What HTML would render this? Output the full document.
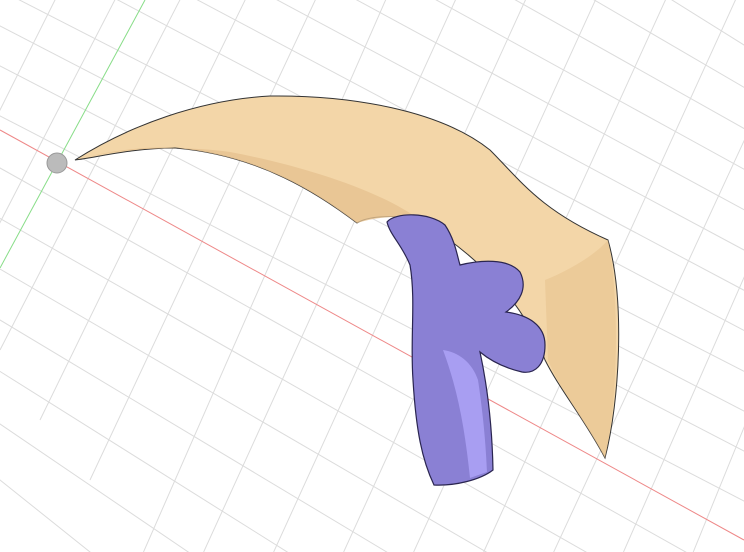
<!DOCTYPE html><html><head><style>html,body{margin:0;padding:0;background:#fff;overflow:hidden}svg{display:block}</style></head><body>
<svg width="744" height="552" viewBox="0 0 744 552" xmlns="http://www.w3.org/2000/svg">
<rect width="744" height="552" fill="#fff"/>
<g stroke="#dcdcdc" stroke-width="1" fill="none">
<path d="M-50,40 L800,480M-50,0 L800,440M0,-10 L800,400M80,-20 L800,360M160,-20 L800,320M240,-20 L800,280M320,-20 L800,240M400,-20 L800,200M480,-20 L800,160M560,-20 L800,120M640,-20 L800,80M-50,90 L800,530M-50,140 L700,560M-50,190 L600,560M-50,240 L500,560M-50,290 L400,560M-50,340 L300,560M-50,390 L200,560M-50,440 L100,560"/>
<path d="M60,-10 L-60,230M120,-10 L-40,300M185,-10 L0,350M250,-10 L40,420M320,-10 L90,480M390,-10 L140,560M460,-10 L200,560M530,-10 L270,560M600,-10 L340,560M670,-10 L410,560M740,-10 L480,560M800,20 L550,560M800,150 L620,560M800,290 L690,560"/>
</g>
<line x1="0" y1="130" x2="744" y2="540" stroke="#e88" stroke-width="1"/>
<line x1="145" y1="0" x2="0" y2="268" stroke="#8d8" stroke-width="1"/>
<circle cx="57" cy="163" r="10" fill="#bbb" stroke="#999"/>
<path d="M75,160 C130,125 200,100 270,96 C350,95 440,110 490,150 C520,180 540,210 608,240 C625,300 620,400 605,458 C585,420 560,390 545,360 C530,320 500,270 420,220 C400,215 370,215 357,223 C320,195 260,155 175,148 C130,148 95,158 75,160 Z" fill="#f3d6a8" stroke="#333" stroke-width="1"/>
<path d="M75,160 C110,150 150,146 175,148 C260,155 320,195 357,223 C380,216 405,215 420,220 C380,190 300,165 230,152 C170,144 110,150 75,160Z" fill="#e6c290" opacity="0.8"/>
<path d="M545,280 C570,270 595,255 608,240 C620,300 618,400 605,458 C585,420 560,390 548,360Z" fill="#e8c38f" opacity="0.6"/>
<path d="M387,222 C395,212 430,212 445,225 C455,240 457,255 460,265 C480,260 508,258 520,272 C528,288 520,302 506,312 C528,315 545,325 545,345 C545,365 535,374 522,372 C505,368 492,362 480,352 C486,380 492,420 493,470 C480,480 455,486 434,485 C422,460 416,430 413,380 C410,340 416,300 410,265 C402,245 390,235 387,222Z" fill="#8a80d4" stroke="#2a2550" stroke-width="1.2"/>
<path d="M443,350 C458,352 472,362 478,380 C484,420 486,450 487,472 L470,478 C465,430 458,390 443,350Z" fill="#a89ef2"/>
</svg>
</body></html>
